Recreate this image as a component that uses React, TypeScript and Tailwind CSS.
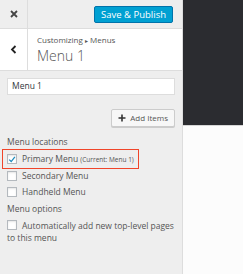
import React from 'react';

const Checkbox = ({ checked }: { checked?: boolean }) => (
  <span className="flex h-[10px] w-[10px] shrink-0 items-center justify-center border border-[#b4b9be] bg-white shadow-[inset_0_1px_2px_rgba(0,0,0,0.1)]">
    {checked && (
      <svg width="9" height="9" viewBox="0 0 10 10">
        <path d="M1.5 5.2 L4 7.6 L8.6 1.8" fill="none" stroke="#1e8cbe" strokeWidth="1.6" />
      </svg>
    )}
  </span>
);

const App = () => {
  return (
    <div className="flex h-[274px] w-[243px] overflow-hidden font-['Open_Sans',sans-serif] text-[#555]">
      <div className="flex w-[183px] shrink-0 flex-col border-r border-[#ddd] bg-[#eee]">
        <div className="flex h-[29px] items-center border-b border-[#ddd]">
          <div className="flex h-full w-[28px] items-center justify-center border-r border-[#ddd]">
            <svg width="8" height="8" viewBox="0 0 8 8">
              <path d="M1 1 L7 7 M7 1 L1 7" stroke="#444" strokeWidth="1.8" />
            </svg>
          </div>
          <div className="flex flex-1 justify-end pr-[9px]">
            <button className="h-[17px] rounded-[2px] border border-[#0073aa] bg-[#00a0d2] px-[6px] text-[9.5px] leading-[15px] text-white">
              Save &amp; Publish
            </button>
          </div>
        </div>
        <div className="flex h-[42px] items-stretch border-b border-[#ddd] bg-white">
          <div className="flex w-[28px] items-center justify-center border-r border-[#ddd]">
            <svg width="7" height="9" viewBox="0 0 7 9">
              <path d="M5.5 1 L2 4.5 L5.5 8" fill="none" stroke="#222" strokeWidth="1.8" />
            </svg>
          </div>
          <div className="flex flex-col justify-center pl-[9px]">
            <div className="text-[8px] leading-[11px] text-[#555]">
              Customizing <span className="text-[6px]">▸</span> Menus
            </div>
            <div className="text-[14px] font-light leading-[18px] text-[#555]">Menu 1</div>
          </div>
        </div>
        <div className="flex flex-col px-[7px] pt-[7px]">
          <div className="flex h-[17px] items-center border border-[#ddd] bg-white pl-[4px] text-[8.5px] text-[#32373c]">
            Menu 1
          </div>
          <div className="mt-[14px] flex justify-end">
            <button className="flex h-[18px] items-center gap-[4px] rounded-[2px] border border-[#ccc] bg-[#f7f7f7] px-[6px] text-[8px] text-[#555] shadow-[0_1px_0_#ccc]">
              <svg width="8" height="8" viewBox="0 0 8 8">
                <path d="M4 0.5 V7.5 M0.5 4 H7.5" stroke="#333" strokeWidth="1.6" />
              </svg>
              Add Items
            </button>
          </div>
          <div className="mt-[9px] text-[8.5px] leading-[12px] text-[#555]">Menu locations</div>
          <div className="-mx-[5px] mt-[1px] flex h-[20px] w-[137px] items-center gap-[5px] border-[1.5px] border-[#f0452a] pl-[4px]">
            <Checkbox checked />
            <span className="whitespace-nowrap text-[8.5px] text-[#555]">
              Primary Menu <span className="text-[6.5px]">(Current: Menu 1)</span>
            </span>
          </div>
          <div className="-mt-[1px] flex h-[16px] items-center gap-[5px]">
            <Checkbox />
            <span className="text-[8.5px] text-[#555]">Secondary Menu</span>
          </div>
          <div className="flex h-[16px] items-center gap-[5px]">
            <Checkbox />
            <span className="text-[8.5px] text-[#555]">Handheld Menu</span>
          </div>
          <div className="mt-[3px] text-[8.5px] leading-[12px] text-[#555]">Menu options</div>
          <div className="mt-[5px] text-[8.5px] leading-[12px] text-[#555]">
            <span className="mr-[5px] inline-block align-[-1px]">
              <Checkbox />
            </span>
            Automatically add new top-level pages to this menu
          </div>
        </div>
      </div>
      <div className="flex flex-1 flex-col">
        <div className="h-[125px] bg-[#2b2c30]" />
        <div className="flex-1 border-t border-[#d6d6d6] bg-[#fcfcfc]" />
      </div>
    </div>
  );
};

export default App;
